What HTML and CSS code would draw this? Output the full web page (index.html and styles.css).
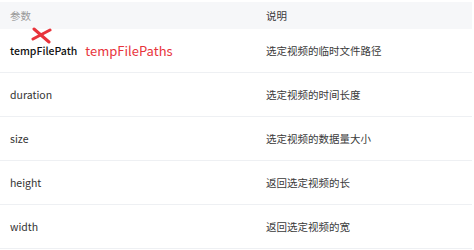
FILE: index.html
```html
<!DOCTYPE html>
<html lang="zh">
<head>
<meta charset="utf-8">
<link rel="stylesheet" href="styles.css">
</head>
<body>
<div class="table">
  <div class="row head">
    <div class="cell c1">参数</div>
    <div class="cell c2">说明</div>
  </div>
  <div class="row">
    <div class="cell c1 marked">
      <span class="param">tempFilePath</span>
      <svg class="cross" width="22" height="17" viewBox="0 0 22 17">
        <path d="M4 2 L19 15" stroke="#e8343c" stroke-width="3" stroke-linecap="round" fill="none"/>
        <path d="M20 3 L3 12" stroke="#e8343c" stroke-width="3" stroke-linecap="round" fill="none"/>
      </svg>
      <span class="fix">tempFilePaths</span>
    </div>
    <div class="cell c2">选定视频的临时文件路径</div>
  </div>
  <div class="row">
    <div class="cell c1">duration</div>
    <div class="cell c2">选定视频的时间长度</div>
  </div>
  <div class="row">
    <div class="cell c1">size</div>
    <div class="cell c2">选定视频的数据量大小</div>
  </div>
  <div class="row">
    <div class="cell c1">height</div>
    <div class="cell c2">返回选定视频的长</div>
  </div>
  <div class="row">
    <div class="cell c1">width</div>
    <div class="cell c2">返回选定视频的宽</div>
  </div>
</div>
</body>
</html>
```
FILE: styles.css
```css
html, body {
  margin: 0;
  padding: 0;
  background: #ffffff;
}
body {
  padding-top: 2px;
  font-family: "Noto Sans CJK SC", "Noto Sans", sans-serif;
  font-size: 10.5px;
  color: #333333;
}
.table {
  width: 472px;
}
.row {
  display: grid;
  grid-template-columns: 256px 1fr;
  height: 43px;
  border-bottom: 1px solid #eef0f3;
}
.row.head {
  height: 27px;
  border-bottom: none;
  background: #f6f7f9;
  color: #9a9a9a;
}
.cell {
  padding-left: 10px;
  display: flex;
  align-items: center;
}
.c2 {
  color: #3a3a3a;
}
.marked {
  position: relative;
}
.param {
  color: #111111;
  font-weight: 500;
}
.fix {
  margin-left: 8px;
  font-size: 13px;
  color: #e8343c;
}
.cross {
  position: absolute;
  left: 30px;
  top: -2px;
}
```
